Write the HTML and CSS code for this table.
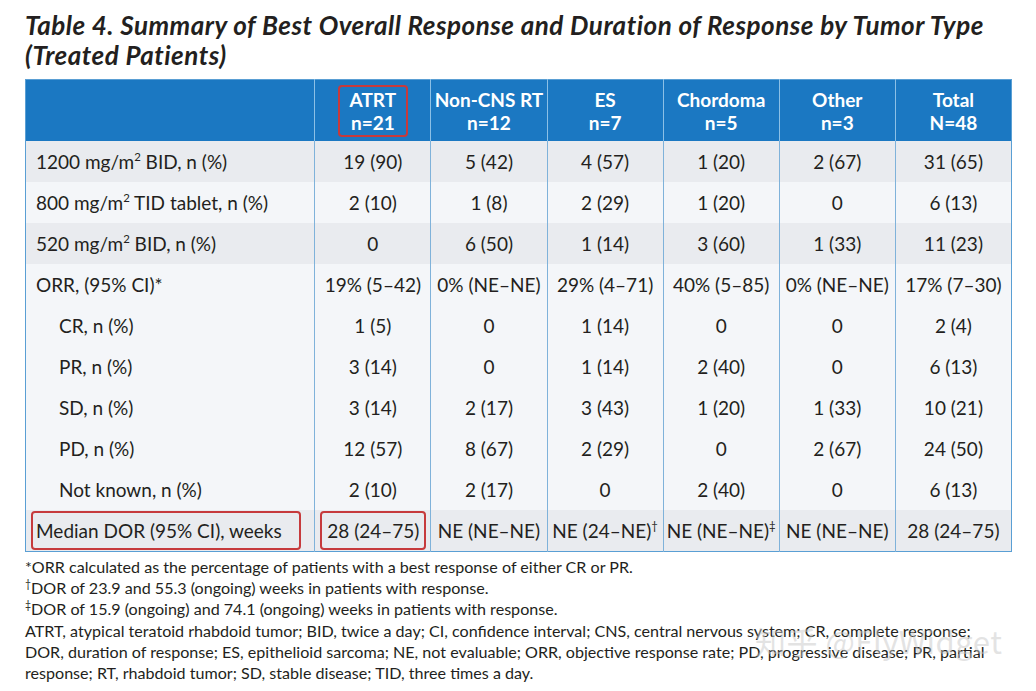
FILE: index.html
```html
<!DOCTYPE html>
<html>
<head>
<meta charset="utf-8">
<link rel="stylesheet" href="styles.css">
</head>
<body>
<div class="page">
  <h1 class="title">Table 4. Summary of Best Overall Response and Duration of Response by Tumor Type<br>(Treated Patients)</h1>
  <table class="tbl">
    <colgroup>
      <col class="c-label"><col class="c-data"><col class="c-data"><col class="c-data"><col class="c-data"><col class="c-data"><col class="c-data">
    </colgroup>
    <thead>
      <tr>
        <th></th>
        <th><span class="hl hl-head">ATRT<br>n=21</span></th>
        <th>Non-CNS RT<br>n=12</th>
        <th>ES<br>n=7</th>
        <th>Chordoma<br>n=5</th>
        <th>Other<br>n=3</th>
        <th>Total<br>N=48</th>
      </tr>
    </thead>
    <tbody>
      <tr class="dark"><td>1200 mg/m<sup>2</sup> BID, n (%)</td><td>19 (90)</td><td>5 (42)</td><td>4 (57)</td><td>1 (20)</td><td>2 (67)</td><td>31 (65)</td></tr>
      <tr class="light"><td>800 mg/m<sup>2</sup> TID tablet, n (%)</td><td>2 (10)</td><td>1 (8)</td><td>2 (29)</td><td>1 (20)</td><td>0</td><td>6 (13)</td></tr>
      <tr class="dark"><td>520 mg/m<sup>2</sup> BID, n (%)</td><td>0</td><td>6 (50)</td><td>1 (14)</td><td>3 (60)</td><td>1 (33)</td><td>11 (23)</td></tr>
      <tr class="light"><td>ORR, (95% CI)*</td><td>19% (5–42)</td><td>0% (NE–NE)</td><td>29% (4–71)</td><td>40% (5–85)</td><td>0% (NE–NE)</td><td>17% (7–30)</td></tr>
      <tr class="light"><td class="ind">CR, n (%)</td><td>1 (5)</td><td>0</td><td>1 (14)</td><td>0</td><td>0</td><td>2 (4)</td></tr>
      <tr class="light"><td class="ind">PR, n (%)</td><td>3 (14)</td><td>0</td><td>1 (14)</td><td>2 (40)</td><td>0</td><td>6 (13)</td></tr>
      <tr class="light"><td class="ind">SD, n (%)</td><td>3 (14)</td><td>2 (17)</td><td>3 (43)</td><td>1 (20)</td><td>1 (33)</td><td>10 (21)</td></tr>
      <tr class="light"><td class="ind">PD, n (%)</td><td>12 (57)</td><td>8 (67)</td><td>2 (29)</td><td>0</td><td>2 (67)</td><td>24 (50)</td></tr>
      <tr class="light"><td class="ind">Not known, n (%)</td><td>2 (10)</td><td>2 (17)</td><td>0</td><td>2 (40)</td><td>0</td><td>6 (13)</td></tr>
      <tr class="dark last"><td class="boxcell"><span class="hl hl-row">Median DOR (95% CI), weeks</span></td><td class="boxcell"><span class="hl hl-val">28 (24–75)</span></td><td>NE (NE–NE)</td><td>NE (24–NE)<sup>†</sup></td><td>NE (NE–NE)<sup>‡</sup></td><td>NE (NE–NE)</td><td>28 (24–75)</td></tr>
    </tbody>
  </table>
  <div class="notes">
    <p>*ORR calculated as the percentage of patients with a best response of either CR or PR.</p>
    <p><sup>†</sup>DOR of 23.9 and 55.3 (ongoing) weeks in patients with response.</p>
    <p><sup>‡</sup>DOR of 15.9 (ongoing) and 74.1 (ongoing) weeks in patients with response.</p>
    <p>ATRT, atypical teratoid rhabdoid tumor; BID, twice a day; CI, confidence interval; CNS, central nervous system; CR, complete response;<br>DOR, duration of response; ES, epithelioid sarcoma; NE, not evaluable; ORR, objective response rate; PD, progressive disease; PR, partial<br>response; RT, rhabdoid tumor; SD, stable disease; TID, three times a day.</p>
  </div>
  <div class="watermark">知乎 @FlyWidget</div>
</div>
</body>
</html>
```
FILE: styles.css
```css
body {
  margin: 0;
  background: #ffffff;
  font-family: Lato, "Open Sans", "Liberation Sans", sans-serif;
  color: #231f20;
}
.page {
  position: relative;
  padding: 10px 0 0 25px;
  width: 987px;
}
.title {
  margin: 0;
  font-size: 26px;
  font-weight: bold;
  font-style: italic;
  line-height: 30px;
  letter-spacing: 0.5px;
  color: #231f20;
  white-space: nowrap;
}
.tbl {
  margin-top: 9px;
  width: 987px;
  border-collapse: collapse;
  table-layout: fixed;
  font-size: 19px;
  border: 1px solid #5a9fd4;
}
.c-label { width: 289px; }
.c-data { width: 116px; }
.tbl th {
  background: #1b78c2;
  color: #ffffff;
  font-weight: bold;
  height: 61px;
  padding: 0;
  line-height: 23px;
  text-align: center;
  vertical-align: middle;
  border-left: 1px solid #8cc0e6;
}
.tbl th:first-child { border-left: none; }
.tbl td {
  height: 41px;
  padding: 0;
  text-align: center;
  vertical-align: middle;
  border-left: 1px solid #7fb2da;
  white-space: nowrap;
}
.tbl td:first-child {
  text-align: left;
  padding-left: 10px;
  border-left: none;
}
.tbl td.ind { padding-left: 33px; }
.tbl tr.dark td { background: #e9ebef; }
.tbl tr.light td { background: #f4f6f9; }
sup {
  font-size: 0.6em;
  line-height: 0;
  vertical-align: 0.7em;
}
.hl {
  display: inline-block;
  border: 2px solid #c63a3c;
  border-radius: 4px;
}
.hl-head {
  padding: 1px 10px;
}
.tbl td.boxcell { padding-left: 5px; text-align: left; }
.hl-row {
  width: 263px;
  padding: 4px 0 4px 3px;
  line-height: 27px;
}
.hl-val {
  padding: 4px 5px;
  line-height: 27px;
}
.notes {
  margin-top: 4px;
  font-size: 16.1px;
  line-height: 21.2px;
  color: #231f20;
  white-space: nowrap;
}
.notes p { margin: 0; }
.notes sup { font-size: 0.65em; vertical-align: 0.6em; }
.watermark {
  position: absolute;
  left: 755px;
  top: 618px;
  font-family: "Noto Sans CJK SC", "Open Sans", sans-serif;
  font-size: 31px;
  color: rgba(200, 200, 200, 0.5);
  white-space: nowrap;
  letter-spacing: 0.5px;
}
```
